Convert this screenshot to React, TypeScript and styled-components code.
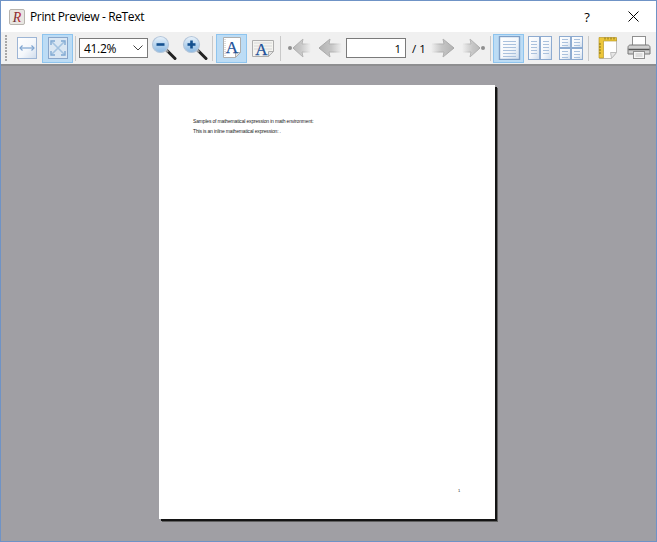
import React from "react";
import styled, { createGlobalStyle } from "styled-components";

const Global = createGlobalStyle`
  html, body { margin: 0; padding: 0; background: #fff; }
  #root { width: 657px; height: 542px; }
  * { box-sizing: border-box; }
`;

const Window = styled.div`
  width: 657px;
  height: 542px;
  display: flex;
  flex-direction: column;
  border: 1px solid #6f93c6;
  background: #fff;
  overflow: hidden;
`;

const TitleBar = styled.div`
  height: 31px;
  flex: none;
  display: flex;
  align-items: center;
  padding-left: 8px;
  background: #fff;
`;

const AppIcon = styled.svg`
  width: 16px;
  height: 16px;
  flex: none;
  margin-right: 5px;
`;

const TitleText = styled.span`
  font-family: "Open Sans", "Noto Sans", sans-serif;
  font-size: 12px;
  letter-spacing: -0.36px;
  color: #000;
  flex: 1;
  white-space: nowrap;
`;

const CaptionButton = styled.div<{ $w: number }>`
  width: ${(p) => p.$w}px;
  height: 30px;
  display: flex;
  align-items: center;
  justify-content: center;
  font-family: "Open Sans", sans-serif;
  font-size: 13px;
  color: #000;
`;

const Toolbar = styled.div`
  height: 32px;
  flex: none;
  display: flex;
  align-items: center;
  padding-left: 4px;
  background: #f0f0f0;
`;

const Grip = styled.div`
  width: 3px;
  height: 26px;
  flex: none;
  margin-right: 3px;
  background-image: radial-gradient(circle at 1px 1px, #a8a8a8 1px, transparent 1px);
  background-size: 3px 3px;
`;

const ToolButton = styled.div<{ $checked?: boolean }>`
  width: 31px;
  height: 29px;
  flex: none;
  display: flex;
  align-items: center;
  justify-content: center;
  border: 1px solid ${(p) => (p.$checked ? "#8ec4ee" : "transparent")};
  background: ${(p) => (p.$checked ? "#bcdcf5" : "transparent")};
`;

const Sep = styled.div<{ $l: number; $r: number }>`
  width: 1px;
  height: 25px;
  flex: none;
  background: #c9c9c9;
  margin: 0 ${(p) => p.$r}px 0 ${(p) => p.$l}px;
`;

const Combo = styled.div`
  width: 69px;
  height: 20px;
  flex: none;
  display: flex;
  align-items: center;
  justify-content: space-between;
  padding: 0 4px 0 4px;
  border: 1px solid #7a7a7a;
  background: #fff;
  font-family: "Open Sans", sans-serif;
  font-size: 12px;
  letter-spacing: -0.3px;
  color: #000;
`;

const PageInput = styled.div`
  width: 60px;
  height: 20px;
  flex: none;
  margin-left: 1px;
  display: flex;
  align-items: center;
  justify-content: flex-end;
  padding-right: 4px;
  border: 1px solid #7a7a7a;
  background: #fff;
  font-family: "Open Sans", sans-serif;
  font-size: 11.5px;
  color: #000;
`;

const PageTotal = styled.div`
  width: 21px;
  flex: none;
  padding-left: 6px;
  font-family: "Open Sans", sans-serif;
  font-size: 11.5px;
  color: #000;
  white-space: nowrap;
`;

const Canvas = styled.div`
  flex: 1;
  min-height: 0;
  background: #a09fa4;
  border-top: 2px solid #8e8e90;
  padding: 19px 0 0 158px;
`;

const Sheet = styled.div`
  width: 336px;
  height: 434px;
  background: #fff;
  box-shadow: 2px 2px 0 #141414, 3px 3px 0 #606060;
  padding: 31px 34px 0 34px;
  display: flex;
  flex-direction: column;
  font-family: "Liberation Sans", Arial, sans-serif;
  color: #1c1c24;
`;

const SheetLine = styled.div`
  font-size: 5px;
  line-height: 10px;
  height: 10px;
  white-space: nowrap;
  letter-spacing: -0.17px;
`;

const SheetBody = styled.div`
  flex: 1;
`;

const PageNumber = styled.div`
  font-size: 4px;
  line-height: 6px;
  height: 6px;
  margin: 0 0 25px 265px;
`;

const Icon: React.FC<{ children: React.ReactNode; s?: number }> = ({ children, s = 24 }) => (
  <svg width={s} height={s} viewBox="0 0 24 24">{children}</svg>
);

const Defs = () => (
  <svg width="0" height="0" style={{ position: "absolute" }}>
    <defs>
      <linearGradient id="paper" x1="0" y1="0" x2="1" y2="1">
        <stop offset="0" stopColor="#ffffff" />
        <stop offset="0.55" stopColor="#f4f7fb" />
        <stop offset="1" stopColor="#cfdcec" />
      </linearGradient>
      <linearGradient id="lens" x1="0" y1="0" x2="0" y2="1">
        <stop offset="0" stopColor="#eaf3fb" />
        <stop offset="1" stopColor="#8ab8e2" />
      </linearGradient>
      <linearGradient id="arrowL" gradientUnits="userSpaceOnUse" x1="0" y1="0" x2="24" y2="0">
        <stop offset="0" stopColor="#b0b0b0" />
        <stop offset="0.55" stopColor="#c6c6c6" />
        <stop offset="1" stopColor="#f0f0f0" />
      </linearGradient>
      <linearGradient id="arrowEdge" gradientUnits="userSpaceOnUse" x1="0" y1="0" x2="24" y2="0">
        <stop offset="0" stopColor="#a4a4a4" />
        <stop offset="0.65" stopColor="#b4b4b4" />
        <stop offset="1" stopColor="#f0f0f0" />
      </linearGradient>
      <linearGradient id="logoR" x1="0" y1="0" x2="1" y2="0">
        <stop offset="0" stopColor="#3a3a3a" />
        <stop offset="0.45" stopColor="#8a2a30" />
        <stop offset="1" stopColor="#d02028" />
      </linearGradient>
      <filter id="soft" x="-10%" y="-10%" width="120%" height="120%">
        <feGaussianBlur stdDeviation="0.4" />
      </filter>
    </defs>
  </svg>
);

const FitWidth = () => (
  <Icon>
    <rect x="2.5" y="1.5" width="19" height="21" fill="url(#paper)" stroke="#9db5d5" />
    <path d="M5 12h14" stroke="#7fa5d0" strokeWidth="1.2" />
    <path d="M7.5 9.5L5 12l2.5 2.5M16.5 9.5L19 12l-2.5 2.5" fill="none" stroke="#7fa5d0" strokeWidth="1.2" />
  </Icon>
);
const FitPage = () => (
  <Icon>
    <rect x="2.5" y="1.5" width="19" height="21" fill="#dbe7f3" stroke="#8aa6ca" />
    <path d="M6 6l12 12M18 6L6 18" stroke="#a3c2e0" strokeWidth="1.6" />
    <path d="M5 9V5h4M15 5h4v4M5 15v4h4M15 19h4v-4" fill="none" stroke="#7fa8d2" strokeWidth="1.4" />
  </Icon>
);
const Zoom: React.FC<{ plus?: boolean }> = ({ plus }) => (
  <svg width="26" height="26" viewBox="0 0 26 26">
    <path d="M16 15.5l8 8" stroke="#222" strokeWidth="3" strokeLinecap="round" />
    <path d="M14 14l3 3" stroke="#9a9a9a" strokeWidth="2.4" />
    <circle cx="9.5" cy="9.5" r="8" fill="url(#lens)" stroke="#b4c6da" strokeWidth="1.2" />
    <path d="M5.5 9.5h8" stroke="#14508f" strokeWidth="2.6" />
    {plus && <path d="M9.5 5.5v8" stroke="#14508f" strokeWidth="2.6" />}
  </svg>
);
const Portrait = () => (
  <Icon>
    <path d="M3.5 1.5h17v15l-5 5h-12z" fill="#fff" stroke="#aeaeae" />
    <path d="M15.5 21.5v-5h5z" fill="#e4e4e4" stroke="#aeaeae" />
    <path d="M5 3v17" stroke="#bcbcbc" strokeDasharray="1 1" />
    <text x="12" y="16.5" textAnchor="middle" fontFamily="Liberation Serif, serif" fontSize="17" fill="#1d5199" stroke="#1d5199" strokeWidth="0.25">A</text>
  </Icon>
);
const Landscape = () => (
  <Icon>
    <path d="M1.5 4.5h21v11l-5 5h-16z" fill="#f4f4f0" stroke="#aeaeae" />
    <path d="M17.5 20.5v-5h5z" fill="#e4e4e4" stroke="#aeaeae" />
    <path d="M3 7h18M3 10h18M3 13h18" stroke="#d8d8d8" />
    <text x="10.5" y="18.5" textAnchor="middle" fontFamily="Liberation Serif, serif" fontSize="17" fill="#1d5199" stroke="#1d5199" strokeWidth="0.25">A</text>
  </Icon>
);
const Arrow: React.FC<{ right?: boolean; dot?: boolean }> = ({ right, dot }) => (
  <svg width="24" height="24" viewBox="0 0 24 24" style={right ? { transform: "scaleX(-1)" } : undefined}>
    <g filter="url(#soft)">
      {dot && <circle cx="3" cy="12" r="2" fill="#8f8f8f" />}
      <path
        d={dot ? "M6 12l10-9-1 5h9v8h-9l1 5z" : "M1 12l11-9-1 5h13v8H11l1 5z"}
        fill="url(#arrowL)"
      />
      <path
        d={dot ? "M23 8h-8l1-5L6 12l10 9-1-5h8" : "M23 8H11l1-5L1 12l11 9-1-5h12"}
        fill="none"
        stroke="url(#arrowEdge)"
      />
    </g>
  </svg>
);
const lines = (x: number, y: number, w: number, n: number, gap: number) =>
  Array.from({ length: n }, (_, i) => (
    <path key={`${x}-${y}-${i}`} d={`M${x} ${y + i * gap}h${w}`} stroke="#aac1dd" strokeWidth="1" />
  ));
const PageOne = () => (
  <Icon>
    <rect x="2.5" y="0.5" width="20" height="23" fill="url(#paper)" stroke="#7f9fc6" strokeWidth="1.4" />
    {lines(6, 5.5, 13, 6, 3)}
  </Icon>
);
const PageTwo = () => (
  <Icon>
    <rect x="0.5" y="0.5" width="11" height="23" fill="url(#paper)" stroke="#8eabd0" />
    <rect x="12.5" y="0.5" width="11" height="23" fill="url(#paper)" stroke="#8eabd0" />
    {lines(3, 5.5, 6, 5, 3)}
    {lines(15, 5.5, 6, 5, 3)}
  </Icon>
);
const PageFour = () => (
  <Icon>
    <rect x="0.5" y="0.5" width="11" height="11" fill="url(#paper)" stroke="#8eabd0" />
    <rect x="12.5" y="0.5" width="11" height="11" fill="url(#paper)" stroke="#8eabd0" />
    <rect x="0.5" y="12.5" width="11" height="11" fill="url(#paper)" stroke="#8eabd0" />
    <rect x="12.5" y="12.5" width="11" height="11" fill="url(#paper)" stroke="#8eabd0" />
    {lines(3, 3.5, 6, 3, 3)}
    {lines(15, 3.5, 6, 3, 3)}
    {lines(3, 15.5, 6, 3, 3)}
    {lines(15, 15.5, 6, 3, 3)}
  </Icon>
);
const Setup = () => (
  <Icon>
    <path d="M3.5 2.5h17v14l-5 6h-12z" fill="#fff" stroke="#bdbdbd" />
    <path d="M15.5 22.5c0-2-1-5-1-6h6z" fill="#e6e6e6" stroke="#bdbdbd" />
    <path d="M3 1.5h17.5v3.5H7.5v17H3z" fill="#ecc63a" stroke="#b08f1c" strokeWidth="0.6" />
    <path d="M9 1.5v2M12 1.5v2M15 1.5v2M18 1.5v2M3 8h2M3 11h2M3 14h2M3 17h2" stroke="#6d5a12" strokeWidth="0.8" />
  </Icon>
);
const Printer = () => (
  <Icon>
    <rect x="5.5" y="0.5" width="13" height="9" fill="#fff" stroke="#8f8f8f" />
    <path d="M1 11.5C1 10 2 9 3.5 9h17C22 9 23 10 23 11.5V18H1z" fill="#cfcfcf" stroke="#777" />
    <path d="M1.5 13.5h21" stroke="#555" strokeWidth="1.5" />
    <rect x="6.5" y="15.5" width="11" height="7" fill="#f6f6f6" stroke="#8f8f8f" />
    <path d="M8.5 18h7M8.5 20h7" stroke="#c4c4c4" />
  </Icon>
);
const Chevron = () => (
  <svg width="10" height="6" viewBox="0 0 10 6">
    <path d="M0.5 0.5L5 5l4.5-4.5" fill="none" stroke="#444" />
  </svg>
);
const CloseX = () => (
  <svg width="11" height="11" viewBox="0 0 11 11">
    <path d="M.5.5l10 10M10.5.5l-10 10" stroke="#000" strokeWidth="1" />
  </svg>
);

export default function App() {
  return (
    <Window>
      <Global />
      <Defs />
      <TitleBar>
        <AppIcon viewBox="0 0 16 16">
          <rect x="0.5" y="0.5" width="15" height="15" rx="1.5" fill="#e8e6e2" stroke="#b8b4ae" />
          <text x="8" y="13" textAnchor="middle" fontFamily="Liberation Serif, serif" fontStyle="italic" fontSize="14" fill="url(#logoR)">R</text>
        </AppIcon>
        <TitleText>Print Preview - ReText</TitleText>
        <CaptionButton $w={46}>?</CaptionButton>
        <CaptionButton $w={46}><CloseX /></CaptionButton>
      </TitleBar>
      <Toolbar>
        <Grip />
        <ToolButton><FitWidth /></ToolButton>
        <ToolButton $checked><FitPage /></ToolButton>
        <Sep $l={2} $r={3} />
        <Combo>41.2%<Chevron /></Combo>
        <ToolButton><Zoom /></ToolButton>
        <ToolButton><Zoom plus /></ToolButton>
        <Sep $l={2} $r={3} />
        <ToolButton $checked><Portrait /></ToolButton>
        <ToolButton><Landscape /></ToolButton>
        <Sep $l={2} $r={2} />
        <ToolButton><Arrow dot /></ToolButton>
        <ToolButton><Arrow /></ToolButton>
        <PageInput>1</PageInput>
        <PageTotal>/ 1</PageTotal>
        <ToolButton><Arrow right /></ToolButton>
        <ToolButton><Arrow right dot /></ToolButton>
        <Sep $l={1} $r={2} />
        <ToolButton $checked><PageOne /></ToolButton>
        <ToolButton><PageTwo /></ToolButton>
        <ToolButton><PageFour /></ToolButton>
        <Sep $l={2} $r={3} />
        <ToolButton><Setup /></ToolButton>
        <ToolButton><Printer /></ToolButton>
      </Toolbar>
      <Canvas>
        <Sheet>
          <SheetLine>Samples of mathematical expression in math environment:</SheetLine>
          <SheetLine>This is an inline mathematical expression: .</SheetLine>
          <SheetBody />
          <PageNumber>1</PageNumber>
        </Sheet>
      </Canvas>
    </Window>
  );
}
